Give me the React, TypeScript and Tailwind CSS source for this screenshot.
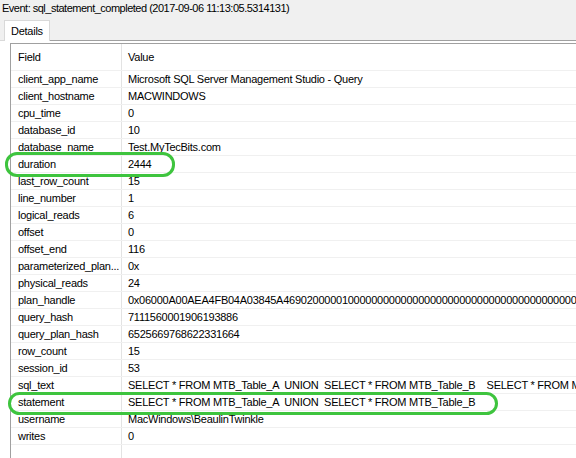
const rows: [string, string][] = [
  ["client_app_name", "Microsoft SQL Server Management Studio - Query"],
  ["client_hostname", "MACWINDOWS"],
  ["cpu_time", "0"],
  ["database_id", "10"],
  ["database_name", "Test.MyTecBits.com"],
  ["duration", "2444"],
  ["last_row_count", "15"],
  ["line_number", "1"],
  ["logical_reads", "6"],
  ["offset", "0"],
  ["offset_end", "116"],
  ["parameterized_plan...", "0x"],
  ["physical_reads", "24"],
  ["plan_handle", "0x06000A00AEA4FB04A03845A46902000001000000000000000000000000000000000000000000000000"],
  ["query_hash", "7111560001906193886"],
  ["query_plan_hash", "6525669768622331664"],
  ["row_count", "15"],
  ["session_id", "53"],
  ["sql_text", "SELECT * FROM MTB_Table_A  UNION  SELECT * FROM MTB_Table_B    SELECT * FROM MTB_Table_C"],
  ["statement", "SELECT * FROM MTB_Table_A  UNION  SELECT * FROM MTB_Table_B"],
  ["username", "MacWindows\\BeaulinTwinkle"],
  ["writes", "0"],
]

export default function App() {
  return (
    <div
      className="relative w-[576px] h-[458px] overflow-hidden bg-[#f0f0f0] text-[11px] tracking-[-0.25px] text-black flex flex-col"
      style={{ fontFamily: '"Liberation Sans", Arial, sans-serif' }}
    >
      <div className="h-[20px] pl-[2px] pt-[1px] leading-[14px] whitespace-nowrap tracking-[-0.5px]">
        Event: sql_statement_completed (2017-09-06 11:13:05.5314131)
      </div>

      {/* tab strip */}
      <div className="flex h-[21px] items-end">
        <div className="w-[4px] h-full border-b border-[#d9d9d9]" />
        <div className="w-[46px] h-[21px] bg-white border border-b-0 border-[#d9d9d9] flex items-center pl-[6px]">
          Details
        </div>
        <div className="flex-1 h-full border-b border-[#a0a0a0]" />
      </div>

      {/* tab page */}
      <div className="flex-1 bg-white pl-[10px] pt-[2px] flex flex-col">
        <div className="flex-1 border-l border-t border-[#a0a0a0] flex flex-col">
          <div className="flex h-[27px] border-b border-[#f0f0f0] items-center">
            <div className="w-[111px] h-full border-r border-[#e3e3e3] pl-[7px] flex items-center">Field</div>
            <div className="pl-[6px]">Value</div>
          </div>
          {rows.map(([field, value]) => (
            <div key={field} className="flex h-[17px] border-b border-[#f0f0f0]">
              <div className="w-[111px] h-full border-r border-[#e3e3e3] pl-[7px] flex items-center whitespace-nowrap overflow-hidden">
                {field}
              </div>
              <div className="flex-1 pl-[6px] flex items-center whitespace-pre overflow-hidden">{value}</div>
            </div>
          ))}
          <div className="flex flex-1">
            <div className="w-[111px] h-full border-r border-[#e3e3e3]" />
          </div>
        </div>
      </div>

      {/* highlight marks */}
      <div className="absolute left-[5px] top-[152px] w-[170px] h-[25px] border-[3px] border-[#3ec43e] rounded-[12px]" />
      <div className="absolute left-[8px] top-[392px] w-[490px] h-[23px] border-[3px] border-[#3ec43e] rounded-[12px]" />
    </div>
  )
}
